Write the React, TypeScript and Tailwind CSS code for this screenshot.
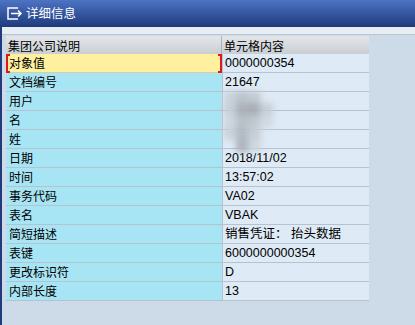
import React from 'react';

const rows: { label: string; value: string }[] = [
  { label: '对象值', value: '0000000354' },
  { label: '文档编号', value: '21647' },
  { label: '用户', value: '' },
  { label: '名', value: '' },
  { label: '姓', value: '' },
  { label: '日期', value: '2018/11/02' },
  { label: '时间', value: '13:57:02' },
  { label: '事务代码', value: 'VA02' },
  { label: '表名', value: 'VBAK' },
  { label: '简短描述', value: '销售凭证： 抬头数据' },
  { label: '表键', value: '6000000000354' },
  { label: '更改标识符', value: 'D' },
  { label: '内部长度', value: '13' },
];

const cjk = "font-['SimSun','Noto_Sans_CJK_SC',sans-serif]";
const latin = "font-['Tahoma','Liberation_Sans','Noto_Sans_CJK_SC',sans-serif]";

// pixelated blur covering the user / name cells
const mosaic: [number, number, string][] = [
  [0, 0, '#c8d0d8'], [1, 0, '#b8c0c8'], [2, 0, '#c0c8d0'],
  [0, 1, '#c4ccd4'], [1, 1, '#a8acb4'], [2, 1, '#a4a8b0'], [3, 1, '#c4ccd4'],
  [0, 2, '#ccd4dc'], [1, 2, '#b4bcc4'], [2, 2, '#bcc4cc'], [3, 2, '#d0d8e0'],
  [0, 3, '#c8d0d8'], [1, 3, '#b0b6be'], [2, 3, '#c4ccd4'],
  [1, 4, '#a8aeb6'], [2, 4, '#ccd4dc'],
];

export default function App() {
  return (
    <div className={`w-[415px] h-[325px] flex flex-col bg-[#cddbe8] overflow-hidden ${cjk}`}>
      <div className="h-[27px] flex items-center gap-[3px] pl-[7px] bg-gradient-to-b from-[#4d74c4] to-[#1f3b7c] text-white text-[12.5px]">
        <svg width="16" height="13" viewBox="0 0 16 13" fill="none" stroke="white" strokeWidth="1.5">
          <path d="M11 1H1V12H11" />
          <path d="M4 6.5H14M11 3.5L14 6.5L11 9.5" />
        </svg>
        <span>详细信息</span>
      </div>
      <div className="flex-1 flex flex-col border-l-2 border-[#1f3b7c]">
        <div className="h-[8px] bg-[#e6eef4] border-b border-[#b9c7d4]" />
        <div className="relative pl-[4px] pt-[1px]">
          <div className="grid grid-cols-[216px_147px] text-[12px] text-black">
            <div className="h-[18px] flex items-center pl-[2px] pt-[1px] bg-gradient-to-b from-[#e4e7ea] to-[#c9ced2] border-r border-[#aab3bc]">
              集团公司说明
            </div>
            <div className="h-[18px] flex items-center pl-[2px] pt-[1px] bg-gradient-to-b from-[#e4e7ea] to-[#c9ced2]">
              单元格内容
            </div>
            {rows.map((r, i) => (
              <React.Fragment key={r.label}>
                <div
                  className={`relative h-[19px] flex items-center pl-[3px] border-b border-[#b6c2ce] ${
                    i === 0 ? 'bg-[#fff0a0] border-[#d8d0a0]' : 'bg-[#a8e5f4]'
                  }`}
                >
                  {i === 0 && (
                    <>
                      <div className="absolute left-0 top-0 h-[19px] w-[4px] border-l-2 border-y-2 border-[#e01818]" />
                      <div className="absolute right-0 top-0 h-[19px] w-[4px] border-r-2 border-y-2 border-[#e01818]" />
                    </>
                  )}
                  {r.label}
                </div>
                <div className={`h-[19px] flex items-center pl-[2px] bg-[#deeaf5] border-l border-b border-[#b6c2ce] ${latin} text-[12.5px]`}>
                  {r.value}
                </div>
              </React.Fragment>
            ))}
          </div>
          <div className="absolute left-[214px] top-[56px] w-[60px] h-[62px] blur-[3px] opacity-90">
            {mosaic.map(([x, y, c], k) => (
              <div
                key={k}
                className="absolute w-[13px] h-[13px]"
                style={{ left: x * 12 + 8, top: y * 12, background: c }}
              />
            ))}
          </div>
        </div>
      </div>
    </div>
  );
}
